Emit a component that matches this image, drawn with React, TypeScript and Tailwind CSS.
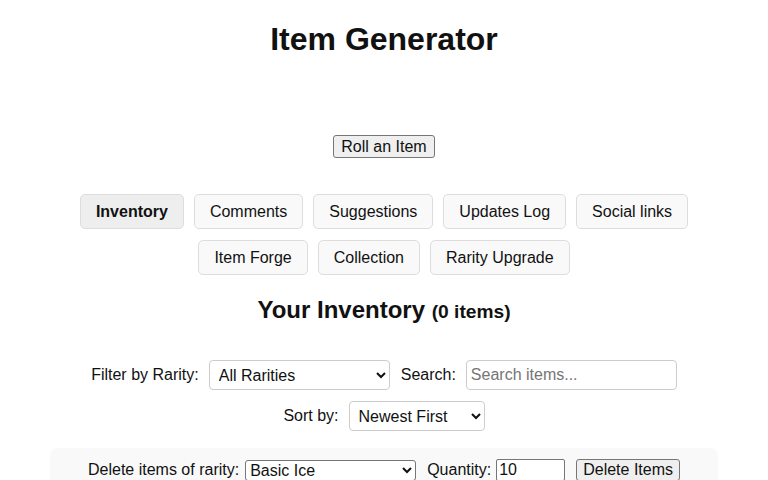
import { useState } from "react";

const tabsTop = ["Inventory", "Comments", "Suggestions", "Updates Log", "Social links"];
const tabsBottom = ["Item Forge", "Collection", "Rarity Upgrade"];

const TabButton = ({ label, active }: { label: string; active: boolean }) => (
  <button
    className={`h-[35px] px-[15px] rounded-[5px] border border-[#ddd] text-base leading-[17px] text-[#111] ${
      active ? "bg-[#eee] font-bold" : "bg-[#f9f9f9]"
    }`}
  >
    {label}
  </button>
);

export default function App() {
  const [active] = useState("Inventory");

  return (
    <div className="min-h-[480px] bg-white text-[#111] font-['Liberation_Sans'] flex flex-col items-center">
      {/* Header */}
      <h1 className="mt-[21px] text-[32px] leading-[37px] font-bold">Item Generator</h1>

      {/* Result area */}
      <div className="h-[77px]" />

      <button className="h-[23px] px-[7px] bg-[#efefef] border border-[#767676] rounded-[3px] text-base leading-[18px]">
        Roll an Item
      </button>

      {/* Tabs */}
      <div className="mt-[36px] flex flex-col items-center gap-[11px]">
        <div className="flex gap-[10px]">
          {tabsTop.map((t) => (
            <TabButton key={t} label={t} active={t === active} />
          ))}
        </div>
        <div className="flex gap-[10px]">
          {tabsBottom.map((t) => (
            <TabButton key={t} label={t} active={t === active} />
          ))}
        </div>
      </div>

      {/* Inventory heading */}
      <h2 className="mt-[21px] text-2xl leading-[28px] font-bold">
        Your Inventory <span className="text-[19.2px]">(0 items)</span>
      </h2>

      {/* Filters */}
      <div className="mt-[34px] flex items-center">
        <label className="text-base mr-[10px]">Filter by Rarity:</label>
        <select className="w-[181px] h-[30px] pl-[5px] pr-1 border border-[#ccc] rounded-[4px] text-base bg-white">
          <option>All Rarities</option>
        </select>
        <label className="text-base ml-[11px] mr-[10px]">Search:</label>
        <input
          placeholder="Search items..."
          className="w-[211px] h-[30px] px-[4px] border border-[#ccc] rounded-[4px] text-base placeholder:text-[#757575]"
        />
      </div>
      <div className="mt-[11px] flex items-center">
        <label className="text-base mr-[10px]">Sort by:</label>
        <select className="w-[136px] h-[30px] pl-[5px] pr-1 border border-[#ccc] rounded-[4px] text-base bg-white">
          <option>Newest First</option>
        </select>
      </div>

      {/* Bulk delete */}
      <div className="mt-[17px] w-[668px] bg-[#f9f9f9] rounded-[8px] pt-[10px] pb-[12px] flex items-center justify-center">
        <label className="text-base mr-[6px]">Delete items of rarity:</label>
        <select className="w-[171px] h-[21px] border border-[#767676] rounded-[3px] text-base bg-white">
          <option>Basic Ice</option>
        </select>
        <label className="text-base ml-[11px] mr-[5px]">Quantity:</label>
        <input
          defaultValue="10"
          className="w-[69px] h-[22px] px-[2px] border border-[#767676] rounded-[2px] text-base bg-white"
        />
        <button className="ml-[11px] h-[22px] px-[6px] bg-[#efefef] border border-[#767676] rounded-[3px] text-base leading-[18px]">
          Delete Items
        </button>
      </div>
    </div>
  );
}
